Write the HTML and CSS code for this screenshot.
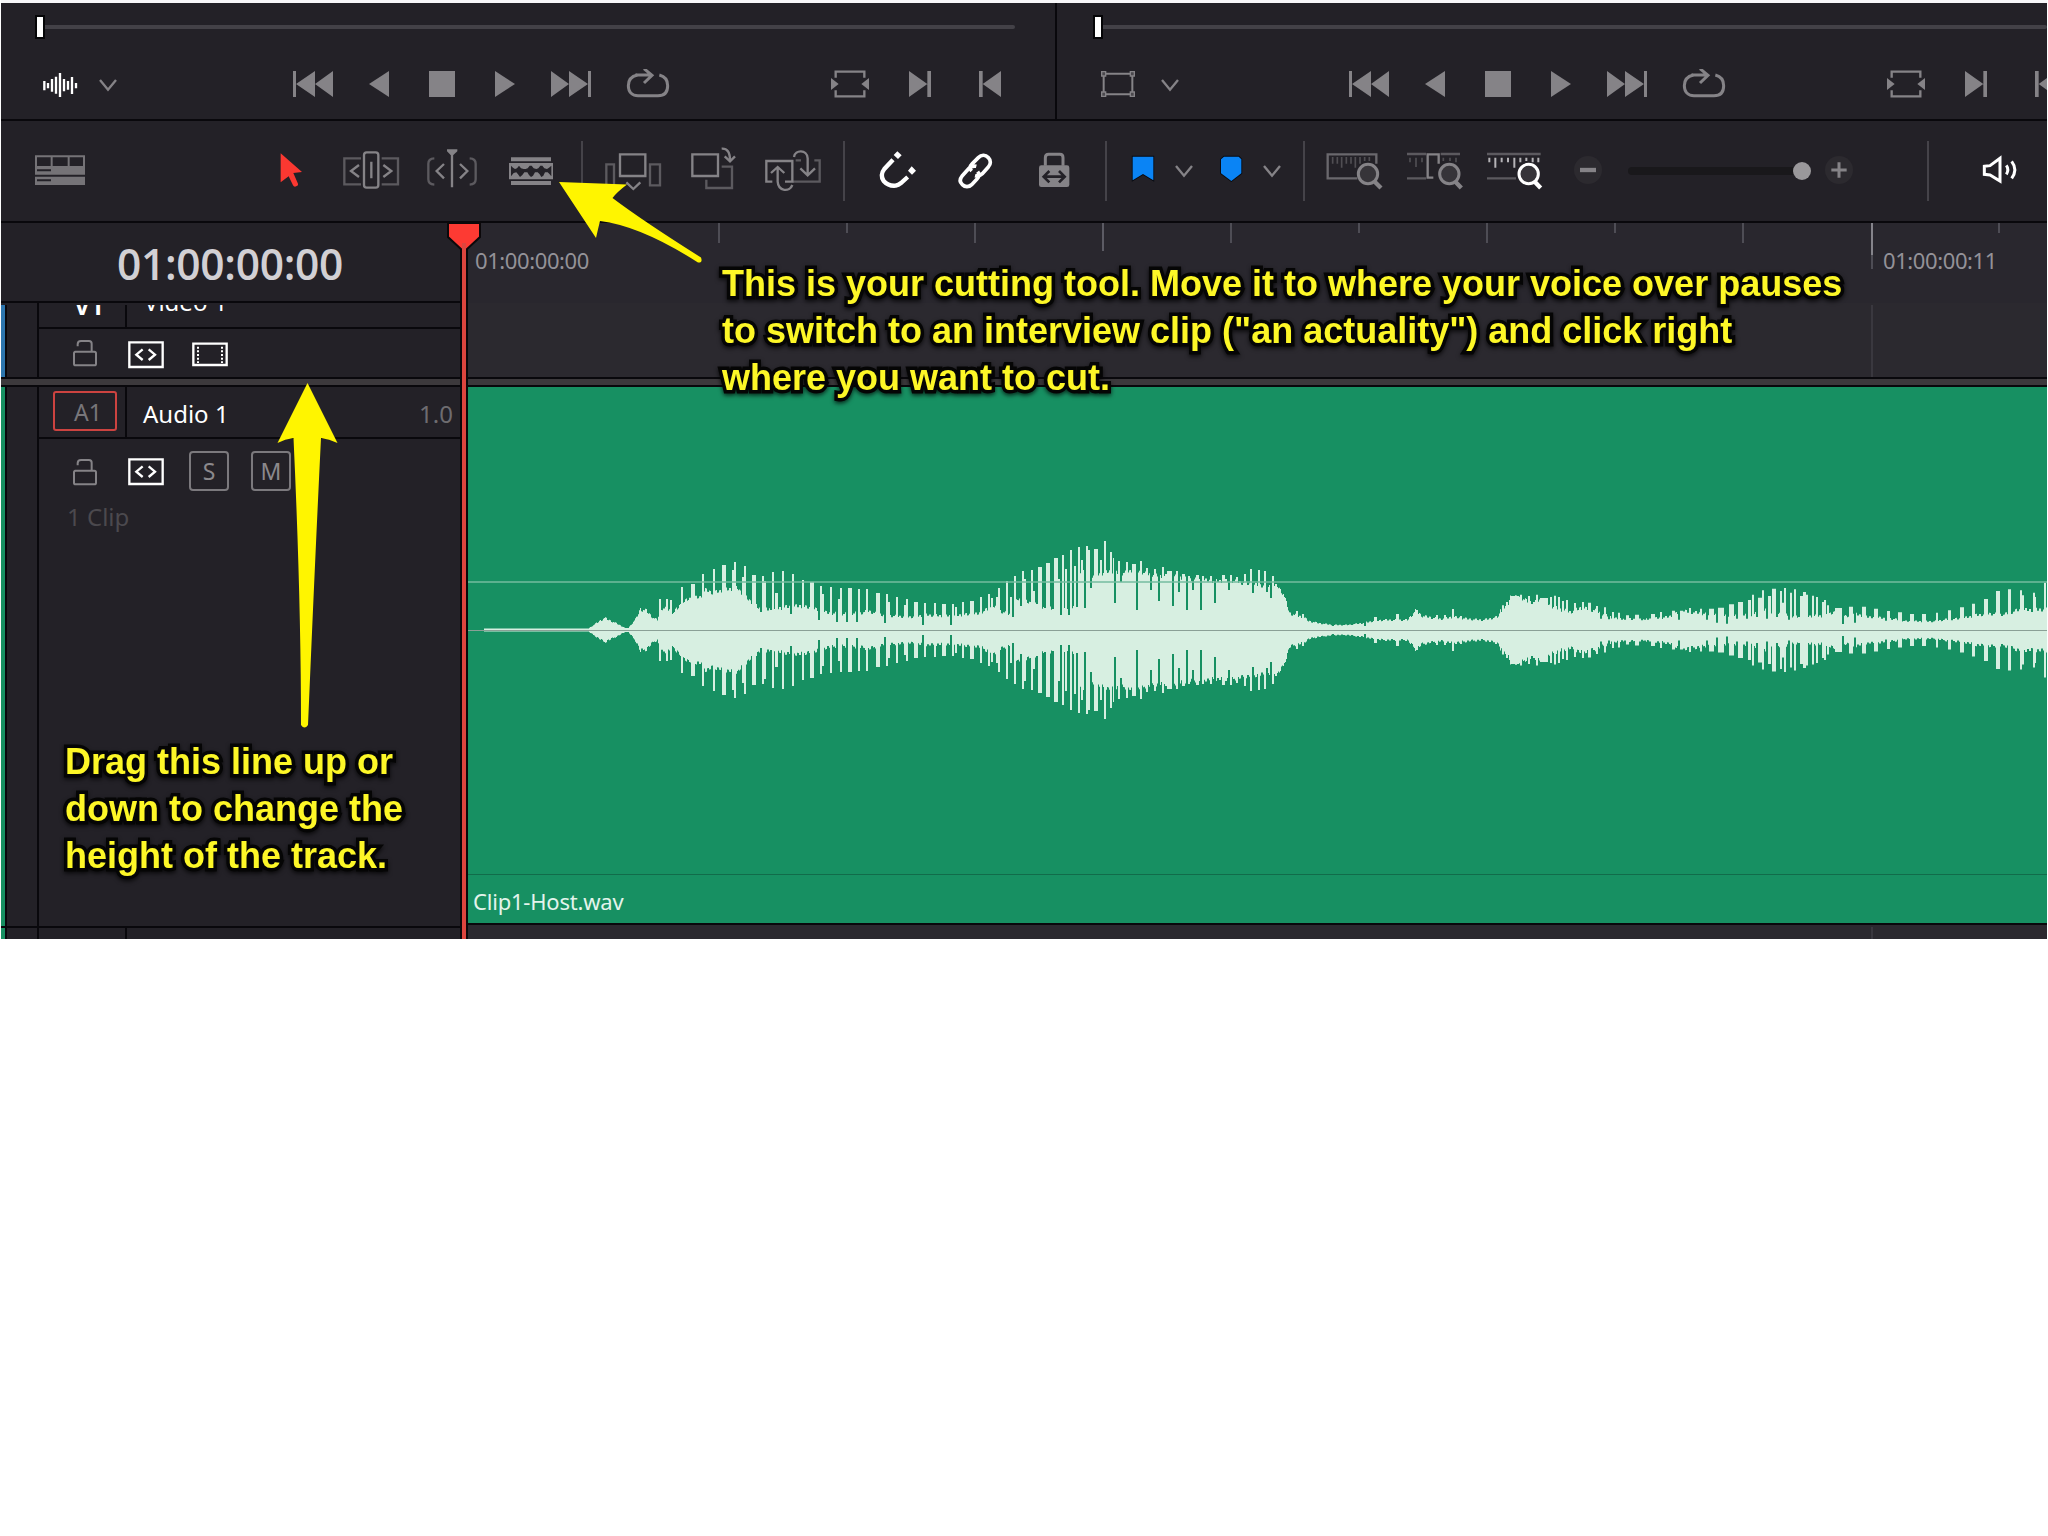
FILE: index.html
```html
<!DOCTYPE html>
<html lang="en">
<head>
    <meta charset="UTF-8">
    <meta name="viewport" content="width=device-width, initial-scale=1.0">
    <title>Timeline</title>
    <link rel="stylesheet" href="styles.css">
</head>
<body>
    <!-- shared icons -->
    <svg class="defs">
        <symbol id="chevron" viewBox="0 0 60 90"><path class="line" d="M6 33L30 62L54 33"/></symbol>
        <symbol id="prev" viewBox="0 0 126 90"><path class="solid" d="M3 6h9v78H3zM12 45L69 6V84zM69 45L123 6V84z"/></symbol>
        <symbol id="reverse" viewBox="0 0 66 90"><path class="solid" d="M3 45L63 6V84z"/></symbol>
        <symbol id="stop" viewBox="0 0 84 90"><path class="solid" d="M3 6h78v78H3z"/></symbol>
        <symbol id="play" viewBox="0 0 66 90"><path class="solid" d="M3 6V84L63 45z"/></symbol>
        <symbol id="next" viewBox="0 0 126 90"><path class="solid" d="M3 6V84L57 45zM57 6V84L114 45zM114 6h9v78h-9z"/></symbol>
        <symbol id="loop" viewBox="0 0 132 90">
            <path class="line thick" d="M34 18C16 22 7 34 7 50C7 70 20 80 36 80H96C114 80 125 70 125 50C125 34 116 22 100 18"/>
            <path class="line thick" d="M28 18H76M54 -1L78 19L54 42"/>
        </symbol>
        <symbol id="match" viewBox="0 0 120 90">
            <path class="line" d="M17 26V8H103V26M17 64V82H103V64"/>
            <path class="solid" d="M3 27L26 45L3 63zM117 27L94 45L117 63z"/>
        </symbol>
        <symbol id="nextframe" viewBox="0 0 72 90"><path class="solid" d="M3 6V84L58 45zM58 6h11v78H58z"/></symbol>
        <symbol id="prevframe" viewBox="0 0 72 90"><path class="solid" d="M3 6h11v78H3zM14 45L69 6V84z"/></symbol>
        <symbol id="unlock" viewBox="0 0 78 90">
            <path class="line thin" d="M8 41H67Q72 41 72 46V77Q72 82 67 82H11Q6 82 6 77V46Q6 41 11 41M17 25V19Q17 9 27 9H51Q59 9 59 17V39"/>
        </symbol>
        <symbol id="autoselect" viewBox="0 0 108 84">
            <path class="line white" d="M4 4H104V78H4z"/>
            <path class="line white" d="M44 25L25 41L44 57M62 25L81 41L62 57"/>
        </symbol>
    </svg>

    <div class="screen">
        <div class="viewers">
            <div class="viewer">
                <div class="scrub"><i class="handle"></i><i class="track"></i></div>
                <div class="transport">
                    <svg width="38" height="30" viewBox="0 0 114 90"><path class="line white" d="M10 36V64M21 42V58M33 30V68M45 23V74M57 12V84M69 30V67M81 36V62M93 24V75M105 42V58"/></svg>
                    <svg width="20" height="30"><use href="#chevron"/></svg>
                    <svg width="42" height="30"><use href="#prev"/></svg>
                    <svg width="22" height="30"><use href="#reverse"/></svg>
                    <svg width="28" height="30"><use href="#stop"/></svg>
                    <svg width="22" height="30"><use href="#play"/></svg>
                    <svg width="42" height="30"><use href="#next"/></svg>
                    <svg width="44" height="30"><use href="#loop"/></svg>
                    <svg width="40" height="30"><use href="#match"/></svg>
                    <svg width="24" height="30"><use href="#nextframe"/></svg>
                    <svg width="24" height="30"><use href="#prevframe"/></svg>
                </div>
            </div>
            <div class="viewer right">
                <div class="scrub"><i class="handle"></i><i class="track"></i></div>
                <div class="transport">
                    <svg width="36" height="30" viewBox="0 0 108 90">
                        <path class="line thin" d="M11 14H97V76H11z"/>
                        <path class="node" d="M5 8h12v13H5zM91 8h12v13H91zM5 69h12v13H5zM91 69h12v13H91z"/>
                    </svg>
                    <svg width="20" height="30"><use href="#chevron"/></svg>
                    <svg width="42" height="30"><use href="#prev"/></svg>
                    <svg width="22" height="30"><use href="#reverse"/></svg>
                    <svg width="28" height="30"><use href="#stop"/></svg>
                    <svg width="22" height="30"><use href="#play"/></svg>
                    <svg width="42" height="30"><use href="#next"/></svg>
                    <svg width="44" height="30"><use href="#loop"/></svg>
                    <svg width="40" height="30"><use href="#match"/></svg>
                    <svg width="24" height="30"><use href="#nextframe"/></svg>
                    <svg width="24" height="30"><use href="#prevframe"/></svg>
                </div>
            </div>
        </div>

        <div class="toolbar">
            <!-- timeline view options -->
            <svg width="50" height="44" viewBox="0 0 150 132">
                <path class="solid dim" d="M0 53H150V77H0zM0 83H150V108H0z"/>
                <path class="line dimline" d="M3 22H147V54H3zM50 22V54M101 22V54"/>
                <path class="cut" d="M6 64H48M6 94H48"/>
            </svg>
            <!-- selection -->
            <svg width="24" height="44" viewBox="0 0 72 132"><path class="red" d="M2 13L66 69L40 72L54 104Q55 108 52 110L45 113Q41 113 39 109L26 82L2 100z"/></svg>
            <!-- trim -->
            <svg width="57" height="44" viewBox="0 0 171 132">
                <path class="line faint" d="M54 28H4V106H54M116 28H165V106H116"/>
                <rect class="line" x="63" y="10" width="43" height="106" rx="8"/>
                <path class="line" d="M85 38V88M48 48L24 66L48 84M121 48L145 66L121 84"/>
            </svg>
            <!-- dynamic trim -->
            <svg width="51" height="44" viewBox="0 0 153 132">
                <path class="line faint" d="M22 28Q4 29 4 44V91Q4 106 22 107M128 28Q146 29 146 44V91Q146 106 128 107"/>
                <path class="line" d="M75 12V115M51 45L29 66L51 88M99 45L121 66L99 88"/>
                <path class="solid" d="M60 1H91V7L79 18H71L60 7z"/>
            </svg>
            <!-- blade -->
            <svg width="45" height="44" viewBox="0 0 135 132">
                <path class="solid" d="M6 25H126V37H6zM6 96H126V108H6zM0 42H132V91H0z"/>
                <path class="dark" d="M6 50L12 56L18 60L24 58L30 50L36 58L44 60L50 60L56 58L62 50L68 50L74 58L82 60L88 58L94 50L100 50L106 58L114 60L120 56L127 50V82L122 76L116 70L108 70L103 80L97 84L92 76L86 70L78 70L72 80L66 84L60 78L55 70L46 70L40 78L33 84L27 76L22 70L14 72L6 82z"/>
            </svg>
            <i class="sep"></i>
            <!-- insert -->
            <svg width="57" height="44" viewBox="0 0 171 132">
                <path class="line faint" d="M4 46H27V109H4zM135 46H165V109H135z"/>
                <path class="line" d="M45 16H121V81H45z"/>
                <path class="line" d="M64 100L85 120L106 100"/>
            </svg>
            <!-- overwrite -->
            <svg width="46" height="44" viewBox="0 0 138 132">
                <path class="line faint" d="M92 53H123V117H46V92"/>
                <path class="line" d="M4 16H81V81H4zM92 -1Q117 -3 117 34M101 22L117 37L132 22"/>
            </svg>
            <!-- replace -->
            <svg width="57" height="44" viewBox="0 0 171 132">
                <path class="line faint" d="M92 34H108M148 34H164V98H84"/>
                <path class="line" d="M22 98H4V36H82V98H60M38 56V98C40 128 74 130 82 108M18 72L38 54L58 72"/>
                <path class="line" d="M87 24C90 2 126 0 128 28V78M106 58L128 79L150 58"/>
            </svg>
            <i class="sep"></i>
            <!-- snapping -->
            <svg width="38" height="44" viewBox="0 0 114 132">
                <path class="magnet" d="M42 32L16 60Q2 78 14 96Q28 112 50 110Q58 108 66 102L86 84"/>
                <path class="whitefill" d="M55 7L68 19L57 30L44 18zM98 52L111 65L99 77L87 65z"/>
            </svg>
            <!-- linked selection -->
            <svg width="36" height="44" viewBox="0 0 108 132">
                <path class="link" d="M44 66C36 58 38 52 46 44L64 26C74 16 86 18 94 26C102 34 102 46 94 54L76 74C70 80 62 82 54 80"/>
                <path class="link" d="M58 52C50 50 42 52 36 58L16 80C8 90 8 100 16 107C24 115 36 115 44 107L60 90C66 84 68 76 62 68"/>
            </svg>
            <!-- position lock -->
            <svg width="32" height="44" viewBox="0 0 96 132">
                <path class="line thick" d="M22 50V26Q22 16 32 16H66Q75 16 75 26V50"/>
                <rect class="solid" x="3" y="49" width="91" height="65" rx="7"/>
                <path class="darkline" d="M20 83H77M34 66L17 83L34 100M63 66L80 83L63 100"/>
            </svg>
            <i class="sep"></i>
            <svg width="26" height="44" viewBox="0 0 78 132"><path class="blue" d="M5 23H67V94L36 75L5 94z"/></svg>
            <svg class="down" width="20" height="30"><use href="#chevron"/></svg>
            <svg width="24" height="44" viewBox="0 0 72 132"><path class="blue" d="M12 23H56L64 31V73L34 96L3 73V31z"/></svg>
            <svg class="down" width="20" height="30"><use href="#chevron"/></svg>
            <i class="sep"></i>
            <!-- full extent zoom -->
            <svg width="58" height="44" viewBox="0 0 174 132">
                <path class="line soft" d="M94 88H5V16H151V44"/>
                <path class="line tick" d="M20 24V44M34 24V44M47 24V56M61 24V44M75 24V44M88 24V56M102 24V44M116 24V36M130 24V36"/>
                <circle class="line lens" cx="126" cy="75" r="29"/>
                <path class="line grip" d="M147 99L165 117"/>
            </svg>
            <!-- detail zoom -->
            <svg width="58" height="44" viewBox="0 0 174 132">
                <path class="line faint" d="M3 15H60M104 15H162M3 88H60"/>
                <path class="line tick" d="M12 26V40M30 26V54M48 26V40M112 26V36M132 26V36M150 26V40"/>
                <path class="line" d="M82 86H65V16H98V44"/>
                <circle class="line lens" cx="130" cy="75" r="29"/>
                <path class="line grip" d="M149 99L166 117"/>
            </svg>
            <!-- custom zoom -->
            <svg width="58" height="44" viewBox="0 0 174 132">
                <path class="line faint" d="M3 15H164M3 88H90"/>
                <path class="line bright" d="M10 26V40M28 26V56M47 26V40M66 26V40M85 26V56M103 26V40M121 26V36M140 26V40M157 26V40"/>
                <circle class="line white lens" cx="128" cy="75" r="29"/>
                <path class="line white grip" d="M147 99L164 117"/>
            </svg>
            <i class="round"><svg width="28" height="28" viewBox="0 0 84 84"><path class="line grip" d="M18 42H66"/></svg></i>
            <div class="zoom"><i class="knob"></i></div>
            <i class="round"><svg width="28" height="28" viewBox="0 0 84 84"><path class="line plus" d="M19 42H65M42 19V65"/></svg></i>
            <i class="sep"></i>
            <svg width="38" height="44" viewBox="0 0 114 132">
                <path class="line white speaker" d="M7 52L24 50L54 28V96L24 78L7 76z"/>
                <path class="line white speaker" d="M73 49Q82 62 73 76M89 37Q108 62 89 88"/>
            </svg>
        </div>

        <div class="timeline">
            <div class="heads">
                <div class="timecode">01:00:00:00</div>
                <div class="track-head video">
                    <i class="strip"></i><i class="gutter"></i>
                    <div class="info">
                        <div class="name-row">
                            <div class="dest"><b>V1</b></div>
                            <div class="name"><span>Video 1</span></div>
                        </div>
                        <div class="controls">
                            <svg width="26" height="30"><use href="#unlock"/></svg>
                            <svg width="36" height="28"><use href="#autoselect"/></svg>
                            <svg width="36" height="26" viewBox="0 0 108 78">
                                <path class="line white" d="M4 8H104V72H4z"/>
                                <path class="dots" d="M18 17V66M90 17V66"/>
                            </svg>
                        </div>
                    </div>
                </div>
                <div class="splitter"></div>
                <div class="track-head audio">
                    <i class="strip"></i><i class="gutter"></i>
                    <div class="info">
                        <div class="name-row">
                            <div class="dest"><span class="a1">A1</span></div>
                            <div class="name"><span>Audio 1</span><span class="channels">1.0</span></div>
                        </div>
                        <div class="controls">
                            <svg width="26" height="30"><use href="#unlock"/></svg>
                            <svg width="36" height="28"><use href="#autoselect"/></svg>
                            <span class="key">S</span>
                            <span class="key">M</span>
                        </div>
                        <div class="count">1 Clip</div>
                    </div>
                </div>
                <div class="track-head extra">
                    <i class="strip"></i><i class="gutter"></i>
                    <div class="info">
                        <div class="name-row"><div class="dest"></div></div>
                    </div>
                </div>
            </div>

            <div class="lanes">
                <div class="ruler">
                    <svg class="ticks" width="1586" height="80">
                        <path class="t" d="M258 0V20M386 0V10M514 0V20M770 0V20M898 0V10M1026 0V20M1154 0V10M1282 0V20M1538 0V10"/>
                        <path class="t mid" d="M642 0V28"/>
                        <path class="t major" d="M1411 0V32"/>
                        <path class="t" d="M1411 32V46"/>
                    </svg>
                    <span>01:00:00:00</span><span>01:00:00:11</span>
                </div>
                <div class="lane"></div>
                <div class="splitter"></div>
                <div class="clip">
                    <svg class="wave" width="1586" height="487">
                        <path id="wave"></path>
                        <path class="center" d="M0 243.500H1586"/>
                        <path class="gain" d="M0 195H1586"/>
                    </svg>
                    <div class="clip-name">Clip1-Host.wav</div>
                </div>
                <div class="lane rest"></div>
            </div>
        </div>

        <svg class="playhead" width="36" height="720" viewBox="0 0 36 720">
            <path class="shadow" d="M17 20V716"/>
            <path class="cap" d="M1 0H33V14L19 27H15L1 14z"/>
            <path class="stem" d="M17 20V716"/>
        </svg>

        <svg class="arrows" width="2046" height="936" viewBox="1 3 2046 936">
            <path d="M559 182L627 184.500Q617 192 612.500 198Q643 221 701 257.500Q703 263 698 262.500Q641 226 600 221Q598 229 596 238z"/>
            <path d="M307.500 383L337.500 443Q329 439 321 438Q315 560 308 725Q304.500 730 301 725Q301 600 293.500 438Q285 439 277.500 443z"/>
        </svg>
        <p class="note cutting">This is your cutting tool. Move it to where your voice over pauses<br>to switch to an interview clip ("an actuality") and click right<br>where you want to cut.</p>
        <p class="note drag">Drag this line up or<br>down to change the<br>height of the track.</p>
    </div>
    <script src="wave.js"></script>
</body>
</html>
```

FILE: styles.css
```css
body {
    margin: 0;
    background: #fff;
    font-family: "Noto Sans", "Open Sans", sans-serif;
    color: #fff;
}
.defs {
    display: none;
}
.screen {
    position: relative;
    margin: 0 1px;
    border-top: 3px solid #f7f7f9;
    height: 936px;
    background: #232127;
    overflow: hidden;
}

/* icon strokes */
.line {
    fill: none;
    stroke: #858387;
    stroke-width: 7;
}
.thin { stroke-width: 6; }
.thick { stroke-width: 9; }
.faint { stroke: #5c5a5f; }
.soft { stroke: #6a686d; }
.tick { stroke: #504e53; stroke-width: 5; }
.bright { stroke: #b5b3b7; stroke-width: 6; }
.white { stroke: #fff; }
.lens { stroke-width: 9; fill: #363439; }
.grip { stroke-width: 13; }
.plus { stroke-width: 9; }
.speaker { stroke-width: 9; }
.solid { fill: #858387; }
.dim { fill: #757377; }
.dimline { stroke: #757377; stroke-width: 6; }
.cut { stroke: #232127; stroke-width: 6; }
.dark { fill: #232127; }
.darkline {
    fill: none;
    stroke: #232127;
    stroke-width: 8;
}
.node {
    fill: #4a484d;
    stroke: #858387;
    stroke-width: 4;
}
.red { fill: #fb3831; }
.blue {
    fill: #0a84f5;
    stroke: #08080c;
    stroke-width: 5;
    paint-order: stroke;
}
.whitefill { fill: #fff; }
.magnet, .link {
    fill: none;
    stroke: #fff;
    stroke-width: 13;
}
.link { stroke-width: 11; }

/* viewers */
.viewers {
    display: flex;
    height: 116px;
    border-bottom: 2px solid #09080c;
}
.viewer {
    box-sizing: border-box;
    flex: none;
    width: 1056px;
    padding-top: 12px;
    border-right: 2px solid #09080c;
    overflow: hidden;
}
.viewer.right {
    width: 990px;
    border-right: 0;
}
.scrub {
    display: flex;
    align-items: center;
    padding: 0 40px 0 34px;
    height: 24px;
}
.right .scrub {
    padding: 0 0 0 36px;
}
.handle {
    width: 6px;
    height: 20px;
    background: #fff;
    border: 2px solid #050507;
}
.track {
    flex: 1;
    height: 4px;
    border-radius: 0 2px 2px 0;
    background: #434147;
}
.transport {
    display: grid;
    grid-template-columns: 57px 194px 76px 60px 66px 56px 76px 204px 78px 70px 40px;
    margin-top: 30px;
    padding-left: 40px;
}
.right .transport {
    grid-template-columns: 60px 188px 76px 60px 66px 56px 76px 204px 78px 70px 40px;
    padding-left: 43px;
}
svg {
    display: block;
    overflow: visible;
}

/* toolbar */
.toolbar {
    display: grid;
    grid-template-columns:
        245px 63px 84px 82px 72px 24px 86px 74px 78px
        36px 78px 81px 67px 26px 43px 46px 42px 41px
        23px 80px 80px 88px 54px 197px 102px 55px 38px;
    align-items: center;
    height: 100px;
    padding-left: 34px;
    border-bottom: 2px solid #09080c;
}
.sep {
    width: 2px;
    height: 60px;
    background: #454349;
}
.down {
    margin-top: -2px;
}
.round {
    width: 28px;
    height: 28px;
    margin-top: -3px;
    border-radius: 50%;
    background: #2c2a2f;
}
.zoom {
    display: flex;
    align-items: center;
    justify-content: flex-end;
    width: 183px;
    height: 8px;
    margin-top: -1px;
    border-radius: 4px;
    background: #19181b;
}
.knob {
    width: 18px;
    height: 18px;
    border-radius: 50%;
    background: #9a989b;
}

/* timeline */
.timeline {
    display: grid;
    grid-template-columns: 460px 1fr;
}
.timecode {
    height: 78px;
    border-bottom: 2px solid #09080c;
    padding-left: 116px;
    font-family: "Open Sans", "Noto Sans", sans-serif;
    font-size: 42.5px;
    font-weight: 600;
    line-height: 82px;
    letter-spacing: -0.3px;
    color: #d2d0d4;
}
.track-head {
    display: flex;
    border-bottom: 2px solid #09080c;
}
.video { height: 74px; }
.audio { height: 539px; }
.extra { height: 11px; border: 0; overflow: hidden; }
.strip {
    width: 4px;
    margin-top: 2px;
    border-right: 2px solid #09080c;
    background: #179062;
}
.video .strip { background: #2d76ae; }
.audio .strip, .extra .strip { margin: 0; }
.gutter {
    width: 30px;
    border-right: 2px solid #09080c;
}
.info { flex: 1; }
.name-row {
    display: flex;
    height: 50px;
    border-bottom: 2px solid #09080c;
    font-size: 24px;
    line-height: 33px;
}
.video .name-row {
    height: 22px;
    margin-top: 2px;
    align-items: flex-end;
    overflow: hidden;
}
.dest {
    width: 86px;
    align-self: stretch;
    border-right: 2px solid #09080c;
    display: flex;
    align-items: center;
    justify-content: center;
}
.video .dest {
    align-items: flex-end;
}
.video b {
    margin: 0 -14px 5px 0;
}
.a1 {
    box-sizing: border-box;
    width: 64px;
    height: 40px;
    margin: -2px 0 0 6px;
    padding-left: 6px;
    border: 2px solid #cc4340;
    border-radius: 3px;
    text-align: center;
    line-height: 38px;
    font-size: 23px;
    color: #78767a;
}
.name {
    flex: 1;
    display: flex;
    justify-content: space-between;
    align-items: center;
    padding: 3px 8px 0 16px;
}
.video .name {
    padding: 0 0 9px 17px;
}
.channels { color: #6e6c70; }
.controls {
    display: flex;
    padding: 12px 0 0 33px;
}
.controls svg:nth-child(1) {
    margin: -3px 30px 0 0;
}
.controls svg:nth-child(2) {
    margin: 0 28px 0 0;
}
.audio .controls svg {
    margin-top: 7px;
}
.audio .controls svg:nth-child(1) {
    margin-top: 6px;
}
.audio .controls svg:nth-child(2) {
    margin-right: 25px;
}
.dots {
    stroke: #fff;
    stroke-width: 6;
    stroke-dasharray: 6 5;
}
.key {
    box-sizing: border-box;
    width: 40px;
    height: 40px;
    margin-right: 22px;
    border: 2px solid #7b797d;
    border-radius: 4px;
    text-align: center;
    line-height: 36px;
    font-size: 23px;
    color: #8b898d;
}
.count {
    padding: 9px 0 0 28px;
    font-size: 24px;
    color: #4b494e;
}
.splitter {
    height: 6px;
    background: #3c393c;
    border-bottom: 2px solid #09080c;
}
.ruler {
    position: relative;
    display: grid;
    grid-template-columns: 1408px auto;
    height: 80px;
    padding-left: 14px;
    background: #29272e;
    font-size: 22px;
    line-height: 74px;
    letter-spacing: -0.4px;
    color: #949298;
}
.ticks {
    position: absolute;
    left: 0;
    top: 0;
}
.t { stroke: #4e4d55; stroke-width: 2; }
.mid { stroke: #5c5b64; }
.major { stroke: #85848b; }
.lane {
    height: 74px;
    border-bottom: 2px solid #09080c;
    background: linear-gradient(#3a383f, #3a383f) 1410px 2px / 2px 100% no-repeat #2b292f;
}
.rest {
    height: 14px;
    border: 0;
    border-top: 2px solid #09080c;
}
.clip {
    position: relative;
    height: 536px;
    background: #179062;
}
.wave {
    height: 487px;
    border-bottom: 1px solid #116c4a;
}
#wave { fill: #d7efe1; }
.center { stroke: #8aa096; }
.gain { stroke: #74bd9f; stroke-width: 1.5; }
.clip-name {
    padding-left: 12px;
    font-size: 22px;
    line-height: 52px;
    height: 48px;
    letter-spacing: -0.2px;
    color: #e3f4ec;
}

/* things lying over the timeline */
.playhead {
    position: absolute;
    left: 446px;
    top: 220px;
}
.shadow { stroke: #0b080a; stroke-width: 8; }
.stem { stroke: #dd453e; stroke-width: 4; }
.cap {
    fill: #fd3a33;
    stroke: #0b080a;
    stroke-width: 2;
}
.arrows {
    position: absolute;
    left: 0;
    top: 0;
    fill: #fff500;
}
.note {
    position: absolute;
    margin: 0;
    font: bold 36px/47px "Liberation Sans", Arial, sans-serif;
    color: #fdf727;
    white-space: nowrap;
    -webkit-text-stroke: 7px #050505;
    paint-order: stroke fill;
    filter: drop-shadow(0 2px 2px rgba(0, 0, 0, 0.7));
}
.cutting {
    left: 721px;
    top: 257px;
}
.drag {
    left: 64px;
    top: 735px;
}
```

FILE: wave.js
```js
// half-heights of the waveform, in px from the clip's left edge

// body of the sound: x, height
const body = [
    23,1.6, 127,1.6, 143,12, 154,7, 164,2, 167,2, 175,12, 179,21, 185,19, 192,12, 196,10, 199,22, 206,21, 212,17, 219,25, 227,31, 239,33,
    244,40, 252,37, 262,40, 276,42, 281,36, 291,27, 300,20, 312,21, 326,23, 339,24, 352,21, 366,17, 382,16, 399,17, 407,19, 416,16, 432,14,
    449,13, 466,15, 482,14, 499,15, 516,16, 532,23, 542,19
];
const body2 = [
    539,19, 549,15, 556,31, 569,27, 582,23, 594,22, 606,22, 612,24, 615,50, 622,60, 630,54, 639,56, 649,59, 659,56, 672,60, 686,56, 699,54, 712,54,
    726,51, 739,50, 752,49, 772,49, 786,46, 806,44, 816,44, 822,36, 826,24, 828,17, 836,14, 842,13, 847,9, 856,7, 872,5, 886,5, 902,7, 912,9,
    922,10, 932,10, 946,10, 954,19, 961,14, 972,12, 979,11, 992,13, 1006,11, 1022,10, 1036,13, 1042,21, 1049,32, 1059,32
];
// loud peaks: x, height, width
const peaks = [
    199,31,2, 206,31,2, 210,30,2, 221,43,2, 232,46,4, 242,56,2, 253,61,2, 263,65,4, 272,60,2, 274,68,2, 282,53,2, 284,64,2, 293,55,4, 302,54,2,
    304,49,2, 312,58,2, 315,37,3, 322,59,2, 332,56,2, 342,50,2, 351,48,4, 360,44,2, 362,36,2, 370,43,2, 378,31,2, 380,42,2, 389,42,4, 398,41,2,
    406,41,2, 406,23,2, 417,37,4, 426,36,2, 428,28,2, 436,33,2, 444,25,2, 446,31,2, 455,28,4, 464,27,2, 474,27,2, 483,26,4, 492,26,2, 495,23,2,
    502,28,2, 511,29,4, 520,33,2, 528,36,2, 531,32,2, 538,42,2, 536,33,2, 546,49,2, 550,33,2, 554,54,2, 562,59,2, 564,51,2, 571,60,2, 573,39,2,
    579,63,4, 587,67,4, 595,72,4, 598,51,2, 602,75,2, 605,61,2, 610,80,2, 614,64,2, 618,83,2, 621,70,2, 626,84,2, 628,80,2, 635,81,4, 640,70,2,
    644,89,2, 650,78,2, 653,72,2, 658,69,2, 666,68,2, 673,66,5, 680,69,2, 686,62,2, 694,61,2, 702,63,2, 708,59,5, 716,59,2, 722,56,3, 728,54,2,
    736,55,3, 742,54,2, 750,54,2, 762,55,3, 770,55,2, 776,53,2, 784,56,2, 790,61,2, 798,60,2, 804,59,2, 812,54,2, 836,19,2, 842,16,2, 914,13,3,
    936,16,3, 955,20,3, 976,15,2, 984,15,2, 992,21,2, 1000,14,2
];
// gaps between the pulses: x, height
const gaps = [
    300,18, 310,20, 330,16, 358,10, 376,8, 386,8, 396,8, 424,7, 462,5, 490,5, 552,13, 560,24, 576,26, 584,22, 592,21, 600,15, 608,15, 616,23,
    624,22, 630,42, 654,27, 660,48, 676,20, 690,40, 698,29, 712,24, 718,38, 726,20, 732,40, 740,20, 754,27, 768,40, 792,37, 806,38, 810,32,
    872,4, 904,4
];

// second half was measured at its own scale: x from 1500px, raw y
const tailBody = [
    0,215, 20,205, 30,174, 60,178, 80,190, 100,190, 125,180, 140,200, 170,212, 200,220, 230,208, 270,215, 290,225, 330,240, 370,240, 420,242,
    480,235, 520,218, 560,222, 600,228, 640,232, 680,232, 720,228, 760,215, 800,225, 850,235, 890,232, 930,232, 960,215, 990,235, 1010,225,
    1050,235, 1080,235, 1120,240, 1160,248, 1200,248, 1240,248, 1280,242, 1320,240, 1360,230, 1400,225, 1440,228, 1480,215, 1570,212
];
const tailPeaks = [
    9,200,2, 19,190,2, 42,172,8, 60,168,2, 83,172,2, 106,168,2, 125,178,8, 146,175,2, 158,171,2, 169,175,2, 181,187,2, 192,184,2, 214,193,2,
    237,190,2, 255,192,3, 277,202,2, 300,206,2, 323,220,2, 341,222,2, 364,230,4, 392,228,4, 438,226,4, 461,220,2, 495,216,3, 518,216,3,
    544,208,2, 575,210,2, 604,210,5, 632,207,6, 661,197,5, 689,190,5, 713,184,4, 724,168,2, 746,177,5, 752,155,2, 772,172,3, 784,150,4,
    803,157,2, 809,192,3, 815,148,2, 833,162,2, 844,152,2, 862,172,3, 872,160,3, 877,168,2, 895,171,2, 907,175,2, 925,190,3, 930,184,2,
    938,200,2, 968,208,7, 1005,204,4, 1041,204,4, 1075,210,4, 1109,217,4, 1144,221,4, 1178,226,4, 1212,226,4, 1250,222,2, 1286,215,3,
    1322,206,4, 1356,195,3, 1390,181,4, 1424,157,4, 1458,152,3, 1492,155,2, 1495,170,2, 1527,162,2, 1532,175,2, 1558,132,2
];
const tailGaps = [
    290,240, 312,242, 358,243, 415,243, 513,243, 592,243, 621,252, 650,255, 678,240, 706,240, 735,235, 764,240, 792,235, 827,243, 855,235,
    981,256, 1017,252, 1103,246
];

const heights = new Array(1586).fill(0);

function fillBody(list) {
    for (let i = 0; i + 3 < list.length; i += 2) {
        const [x0, h0, x1, h1] = list.slice(i, i + 4);
        for (let x = Math.round(x0); x < x1 && x < 1586; x++) {
            // small ripple keeps the outline stepped
            const step = Math.floor(x / 2);
            const h = h0 + (h1 - h0) * (x - x0) / (x1 - x0);
            heights[x] = h > 3 ? h + (step * 7 % 5 - 2) * Math.min(h, 20) / 20 : h;
        }
    }
}

const tx = x => 1039 + x / 2.861;
const th = y => (274 - y) / 3;

fillBody(body);
fillBody(body2);
fillBody(tailBody.map((v, i) => i % 2 ? th(v) : tx(v)));

function peak(x, h, w) {
    const from = Math.round(x - w / 2);
    for (let i = from; i < from + w && i < 1586; i++) heights[i] = Math.max(heights[i], h);
}
for (let i = 0; i < peaks.length; i += 3) peak(peaks[i], peaks[i + 1], peaks[i + 2]);
for (let i = 0; i < tailPeaks.length; i += 3) peak(tx(tailPeaks[i]), th(tailPeaks[i + 1]), tailPeaks[i + 2]);

function gap(x, h) {
    const from = Math.round(x - 1);
    heights[from] = heights[from + 1] = h;
}
for (let i = 0; i < gaps.length; i += 2) gap(gaps[i], gaps[i + 1]);
for (let i = 0; i < tailGaps.length; i += 2) gap(tx(tailGaps[i]), th(tailGaps[i + 1]));

let d = '';
heights.forEach((h, x) => {
    if (h > 0) d += `M${x} ${(243 - h).toFixed(1)}h1v${(h * 2).toFixed(1)}h-1z`;
});
document.getElementById('wave').setAttribute('d', d);
```
